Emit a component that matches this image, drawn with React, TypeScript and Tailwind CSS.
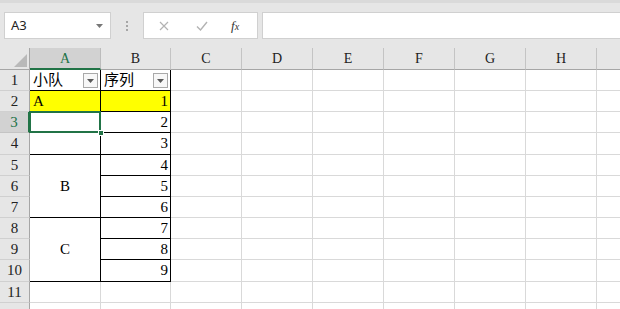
import React from 'react';

const COLS = ['A', 'B', 'C', 'D', 'E', 'F', 'G', 'H', ''];
const ROW_H = ['h-[21px]', 'h-[21px]', 'h-[21px]', 'h-[22px]', 'h-[21px]', 'h-[21px]', 'h-[21px]', 'h-[21px]', 'h-[21px]', 'h-[22px]', 'h-[21px]', 'h-[21px]'];

const serif = { fontFamily: '"Liberation Serif", "Noto Sans CJK SC", serif' };

function FilterBtn() {
  return (
    <div className="absolute right-[2px] top-[3px] w-[15px] h-[15px] border border-[#a9a9a9] bg-[#f7f7f7] flex items-center justify-center">
      <svg width="7" height="4" viewBox="0 0 7 4">
        <polygon points="0,0 7,0 3.5,4" fill="#595959" />
      </svg>
    </div>
  );
}

function Toolbar() {
  return (
    <div className="h-[48px] bg-[#e6e6e6] border-t-[3px] border-[#dadada] flex items-start pt-[9px] pl-[4px] gap-0">
      <div className="w-[107px] h-[27px] bg-white border border-[#d0d0d0] flex items-center justify-between pl-[6px] pr-[7px]">
        <span className="text-[13px] text-[#222]" style={{ fontFamily: '"Noto Sans", sans-serif' }}>A3</span>
        <svg width="7" height="4" viewBox="0 0 7 4">
          <polygon points="0,0 7,0 3.5,4" fill="#777" />
        </svg>
      </div>
      <div className="w-[32px] h-[27px] flex flex-col items-center justify-center gap-[2px]">
        <div className="w-[2px] h-[2px] bg-[#a6a6a6]" />
        <div className="w-[2px] h-[2px] bg-[#a6a6a6]" />
        <div className="w-[2px] h-[2px] bg-[#a6a6a6]" />
      </div>
      <div className="w-[115px] h-[27px] bg-white border border-[#d0d0d0] flex items-center">
        <svg className="ml-[15px]" width="10" height="10" viewBox="0 0 10 10">
          <path d="M1 1 L9 9 M9 1 L1 9" stroke="#b3b3b3" strokeWidth="1.2" />
        </svg>
        <svg className="ml-[27px]" width="12" height="10" viewBox="0 0 12 10">
          <path d="M1 5.5 L4.5 9 L11 1" stroke="#b3b3b3" strokeWidth="1.4" fill="none" />
        </svg>
        <span className="ml-[23px] text-[13px] italic text-[#333]" style={serif}>
          f<span className="text-[10px]">x</span>
        </span>
      </div>
      <div className="ml-[4px] flex-1 h-[27px] bg-white border border-[#d0d0d0] border-r-0" />
    </div>
  );
}

export default function App() {
  const rows = Array.from({ length: 12 }, (_, i) => i + 1);

  const dataCell = (r: number, c: number) => {
    const key = `${r}-${c}`;
    const grid = 'border-r border-b border-[#d9d9d9] bg-white';
    if (c === 0) {
      if (r === 1)
        return (
          <div key={key} className="relative border-r border-b border-black bg-white pl-[3px] flex items-center text-[15px] text-black" style={serif}>
            小队
            <FilterBtn />
          </div>
        );
      if (r === 2)
        return (
          <div key={key} className="border-r border-b border-black bg-[#ffff00] pl-[3px] flex items-center text-[15px] text-black" style={serif}>
            A
          </div>
        );
      if (r === 3)
        return (
          <div key={key} className="relative border-r border-b border-black bg-white">
            <div className="absolute -left-[1px] -top-[1px] -right-[1px] -bottom-[1px] border-2 border-[#217346]" />
            <div className="absolute -right-[4px] -bottom-[4px] w-[6px] h-[6px] bg-[#217346] border border-white" />
          </div>
        );
      if (r === 4)
        return <div key={key} className="border-r border-b border-black bg-white" />;
      if (r === 5 || r === 8)
        return (
          <div key={key} className="row-span-3 border-r border-b border-black bg-white flex items-center justify-center text-[15px] text-black" style={serif}>
            {r === 5 ? 'B' : 'C'}
          </div>
        );
      if (r === 6 || r === 7 || r === 9 || r === 10) return null;
      return <div key={key} className={grid} />;
    }
    if (c === 1) {
      if (r === 1)
        return (
          <div key={key} className="relative border-r border-b border-black bg-white pl-[3px] flex items-center text-[15px] text-black" style={serif}>
            序列
            <FilterBtn />
          </div>
        );
      if (r <= 10)
        return (
          <div
            key={key}
            className={`border-r border-b border-black pr-[2px] flex items-center justify-end text-[15px] text-black ${r === 2 ? 'bg-[#ffff00]' : 'bg-white'}`}
            style={serif}
          >
            {r - 1}
          </div>
        );
      return <div key={key} className={grid} />;
    }
    return <div key={key} className={grid} />;
  };

  return (
    <div className="w-[620px] h-[309px] overflow-hidden bg-white">
      <Toolbar />
      <div className="grid grid-cols-[30px_71px_70px_71px_71px_71px_71px_71px_71px_71px] grid-rows-[22px_21px_21px_21px_22px_21px_21px_21px_21px_21px_22px_21px_21px] w-[668px]">
        {/* corner */}
        <div className="bg-[#e6e6e6] border-r border-b border-[#a6a6a6] flex items-end justify-end pr-[2px] pb-[2px]">
          <svg width="13" height="13" viewBox="0 0 13 13">
            <polygon points="13,0 13,13 0,13" fill="#b9b9b9" />
          </svg>
        </div>
        {COLS.map((c, i) =>
          c === 'A' ? (
            <div
              key={i}
              className="bg-[#d2d2d2] border-r border-[#bcbcbc] border-b-2 border-b-[#217346] flex items-center justify-center text-[14px] text-[#217346]"
              style={serif}
            >
              {c}
            </div>
          ) : (
            <div
              key={i}
              className="bg-[#e6e6e6] border-r border-[#c4c4c4] border-b border-b-[#a6a6a6] flex items-center justify-center text-[14px] text-[#222]"
              style={serif}
            >
              {c}
            </div>
          )
        )}
        {rows.map((r) => (
          <React.Fragment key={r}>
            <div
              className={`${ROW_H[r - 1]} flex items-center justify-center text-[15px] ${
                r === 3
                  ? 'bg-[#d2d2d2] text-[#217346] border-r-2 border-r-[#217346] border-b border-b-[#c4c4c4]'
                  : 'bg-[#e6e6e6] text-[#222] border-r border-r-[#a6a6a6] border-b border-b-[#d0d0d0]'
              }`}
              style={serif}
            >
              {r <= 11 ? r : ''}
            </div>
            {COLS.map((_, c) => dataCell(r, c))}
          </React.Fragment>
        ))}
      </div>
    </div>
  );
}
